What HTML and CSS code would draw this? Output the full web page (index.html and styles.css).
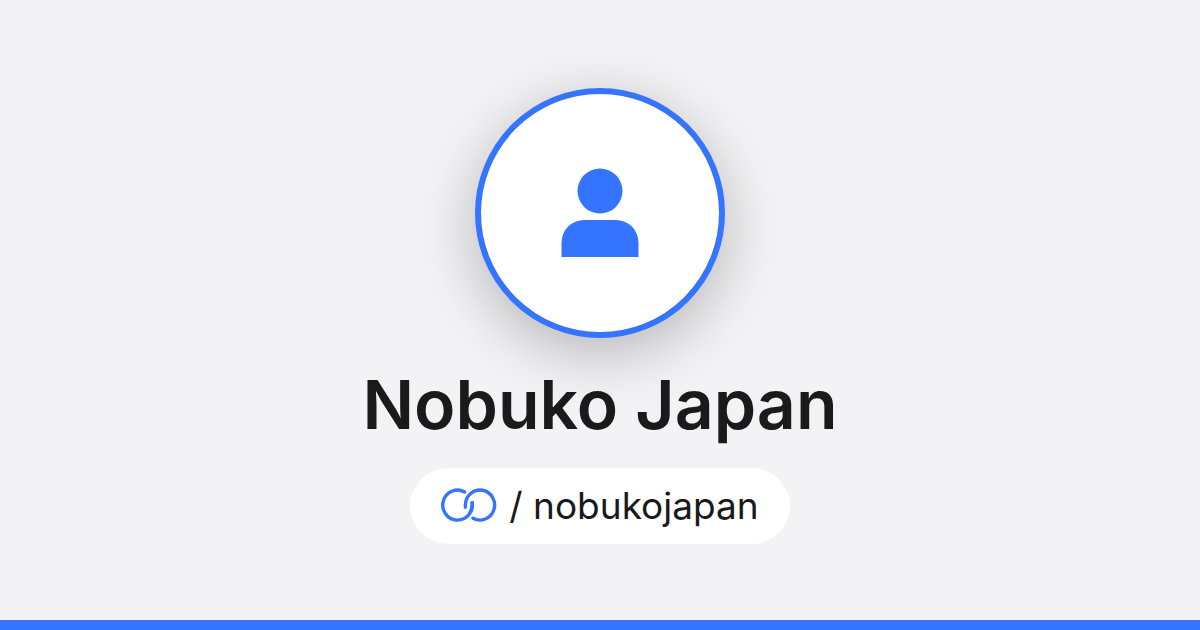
FILE: index.html
```html
<!DOCTYPE html>
<html lang="en">
<head>
    <meta charset="UTF-8">
    <meta name="viewport" content="width=device-width, initial-scale=1.0">
    <title>Nobuko Japan</title>
    <link rel="stylesheet" href="styles.css">
</head>
<body>

<main class="profile">
    <div class="avatar">
        <svg class="avatar-icon" viewBox="0 0 78 90" aria-hidden="true">
            <circle cx="39" cy="23" r="22.5"/>
            <path d="M0.5 89V74.5A22.5 22.5 0 0 1 23 52H55A22.5 22.5 0 0 1 77.5 74.5V89Z"/>
        </svg>
    </div>
    <h1 class="name">Nobuko Japan</h1>
    <div class="handle">
        <svg class="handle-logo" viewBox="0 0 56 36" aria-hidden="true">
            <path d="M23.6 3.9A14.8 15 0 1 0 31.2 14.8"/>
            <path d="M31.2 14.8Q31.4 20 29.2 24.3"/>
            <path d="M24.4 19.3V16.8A14.6 15 0 1 1 32 30.2"/>
        </svg>
        <span class="handle-text">/ nobukojapan</span>
    </div>
</main>

</body>
</html>
```

FILE: styles.css
```css
* {
    margin: 0;
    padding: 0;
    box-sizing: border-box;
}

body {
    font-family: Inter, 'Liberation Sans', sans-serif;
    background-color: #f3f3f6;
    color: #1a1a1a;
}

.profile {
    display: flex;
    flex-direction: column;
    align-items: center;
    min-height: 100vh;
    padding-top: 88px;
    border-bottom: 10px solid #3574ff;
}

.avatar {
    display: flex;
    justify-content: center;
    align-items: center;
    width: 250px;
    height: 250px;
    background-color: white;
    border: 6px solid #3574ff;
    border-radius: 50%;
    box-shadow: 0 15px 60px rgba(0, 0, 0, 0.25);
}

.avatar-icon {
    width: 78px;
    height: 90px;
    fill: #3574ff;
}

.name {
    margin-top: 24px;
    font-size: 68px;
    font-weight: 600;
    line-height: 84px;
    text-align: center;
}

.handle {
    display: flex;
    align-items: center;
    gap: 12px;
    height: 76px;
    margin-top: 22px;
    padding: 0 31px;
    background-color: white;
    border-radius: 38px;
}

.handle-logo {
    width: 56px;
    height: 36px;
    fill: none;
    stroke: #3574ff;
    stroke-width: 3.4;
    stroke-linecap: round;
}

.handle-text {
    font-size: 37px;
    line-height: 44px;
}
```
